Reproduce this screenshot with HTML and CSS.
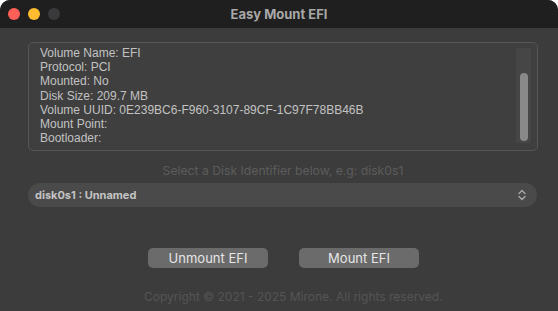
FILE: index.html
```html
<!DOCTYPE html>
<html>
<head>
<meta charset="utf-8">
<link rel="stylesheet" href="styles.css">
</head>
<body>
<div class="window">
  <div class="titlebar">
    <div class="lights">
      <span class="light red"></span>
      <span class="light yellow"></span>
      <span class="light grey"></span>
    </div>
    <div class="title">Easy Mount EFI</div>
  </div>
  <div class="content">
    <div class="infobox">
      <div class="info">
        <div>Volume Name: EFI</div>
        <div>Protocol: PCI</div>
        <div>Mounted: No</div>
        <div>Disk Size: 209.7 MB</div>
        <div>Volume UUID: 0E239BC6-F960-3107-89CF-1C97F78BB46B</div>
        <div>Mount Point:</div>
        <div>Bootloader:</div>
      </div>
      <div class="track"><div class="thumb"></div></div>
    </div>
    <div class="hint">Select a Disk Identifier below, e.g: disk0s1</div>
    <div class="popup">
      <span class="popup-label">disk0s1 : Unnamed</span>
      <svg class="chevron" width="8" height="12" viewBox="0 0 8 12">
        <path d="M1 4.5 L4 1.5 L7 4.5 M1 7.5 L4 10.5 L7 7.5" fill="none" stroke="#a8a8a8" stroke-width="1.4" stroke-linecap="round" stroke-linejoin="round"/>
      </svg>
    </div>
    <div class="buttons">
      <button class="btn">Unmount EFI</button>
      <button class="btn">Mount EFI</button>
    </div>
    <div class="copyright">Copyright © 2021 - 2025 Mirone. All rights reserved.</div>
  </div>
</div>
</body>
</html>
```
FILE: styles.css
```css
html, body {
  margin: 0;
  padding: 0;
  background: #ffffff;
}
.window {
  width: 558px;
  height: 311px;
  background: #3c3c3c;
  border-radius: 10px 10px 0 0;
  overflow: hidden;
  display: flex;
  flex-direction: column;
  font-family: "Inter", "Liberation Sans", sans-serif;
}
.titlebar {
  height: 28px;
  background: #1f1f1f;
  position: relative;
  display: flex;
  align-items: center;
  justify-content: center;
  flex-shrink: 0;
}
.lights {
  position: absolute;
  left: 8px;
  top: 8px;
  display: flex;
  gap: 8px;
}
.light {
  width: 12px;
  height: 12px;
  border-radius: 50%;
  display: block;
}
.red { background: #fe5f57; }
.yellow { background: #febc2e; }
.grey { background: #3a3a3c; }
.title {
  color: #a8a8a8;
  font-weight: 700;
  font-size: 13px;
}
.content {
  padding: 14px 20px 0 28px;
  display: flex;
  flex-direction: column;
}
.infobox {
  height: 107px;
  width: 508px;
  border: 1px solid #565656;
  border-radius: 5px;
  background: #3f3f3f;
  display: flex;
  justify-content: space-between;
  box-sizing: content-box;
}
.info {
  padding: 3px 0 0 11px;
  font-family: "Liberation Sans", Arial, sans-serif;
  font-size: 12px;
  line-height: 14.2px;
  color: #c2c2c2;
}
.track {
  width: 15px;
  margin: 5px 6px 7px 0;
  background: #464646;
  display: flex;
  justify-content: center;
}
.thumb {
  width: 8px;
  height: 68px;
  margin-top: 25px;
  border-radius: 4px;
  background: #898989;
}
.hint {
  margin-top: 12px;
  text-align: center;
  font-size: 12.2px;
  line-height: 15px;
  color: #5c5c5c;
  width: 510px;
}
.popup {
  margin-top: 5px;
  width: 509px;
  height: 24px;
  border-radius: 12px;
  background: #4a4a4a;
  display: flex;
  align-items: center;
  justify-content: space-between;
  padding: 0 11px 0 7px;
  box-sizing: border-box;
}
.popup-label {
  font-weight: 700;
  font-size: 11px;
  color: #c4c4c4;
}
.chevron {
  display: block;
}
.buttons {
  margin-top: 41px;
  display: flex;
  gap: 31px;
  padding-left: 120px;
}
.btn {
  width: 120px;
  height: 20px;
  border: none;
  border-radius: 5px;
  background: #6b6b6b;
  color: #e6e6e6;
  font-family: "Inter", "Liberation Sans", sans-serif;
  font-size: 13px;
  padding: 0;
  line-height: 20px;
}
.copyright {
  margin-top: 21px;
  padding-left: 116px;
  text-align: left;
  font-size: 12px;
  line-height: 15px;
  color: #555555;
}
```
